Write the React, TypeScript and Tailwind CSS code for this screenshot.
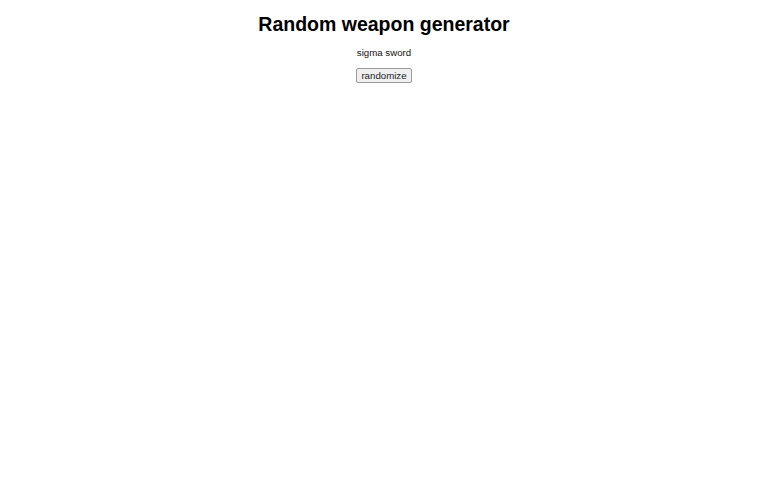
import React, { useState } from 'react';

const weapons = ['sigma sword', 'rusty axe', 'magic bow', 'iron spear', 'golden dagger'];

const App: React.FC = () => {
  const [weapon, setWeapon] = useState('sigma sword');

  const randomize = () => {
    setWeapon(weapons[Math.floor(Math.random() * weapons.length)]);
  };

  return (
    <div className="min-h-screen bg-white text-black text-center font-['Liberation_Sans',Arial,sans-serif]">
      <h1 className="pt-[12px] text-[19.5px] leading-[24px] font-bold">Random weapon generator</h1>
      <p className="mt-[11px] text-[9.7px] leading-[12px] text-[#111]">{weapon}</p>
      <button
        onClick={randomize}
        className="mt-[9px] px-[4px] py-0 text-[9.7px] leading-[13px] text-[#222] bg-[#f0f0f0] border border-[#9a9a9a] rounded-[2px]"
      >
        randomize
      </button>
    </div>
  );
};

export default App;
